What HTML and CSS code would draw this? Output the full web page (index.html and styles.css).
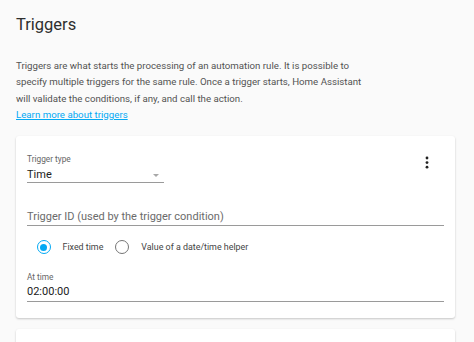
FILE: index.html
```html
<!DOCTYPE html>
<html>
<head>
<meta charset="utf-8">
<link rel="stylesheet" href="styles.css">
</head>
<body>
<div class="page">
  <h1 class="title">Triggers</h1>
  <p class="desc">Triggers are what starts the processing of an automation rule. It is possible to<br>specify multiple triggers for the same rule. Once a trigger starts, Home Assistant<br>will validate the conditions, if any, and call the action.<br><a class="link" href="#">Learn more about triggers</a></p>
  <div class="card">
    <div class="card-top">
      <div class="select">
        <span class="flabel">Trigger type</span>
        <div class="svalue"><span>Time</span><span class="arrow"></span></div>
      </div>
      <div class="kebab">
        <svg width="12" height="16" viewBox="0 0 12 16"><circle cx="6" cy="3" r="1.4" fill="#212121"/><circle cx="6" cy="7.6" r="1.4" fill="#212121"/><circle cx="6" cy="12.2" r="1.4" fill="#212121"/></svg>
      </div>
    </div>
    <div class="textfield"><span class="placeholder">Trigger ID (used by the trigger condition)</span></div>
    <div class="radios">
      <label class="radio-item"><span class="radio checked"></span><span class="rlabel">Fixed time</span></label>
      <label class="radio-item"><span class="radio"></span><span class="rlabel">Value of a date/time helper</span></label>
    </div>
    <div class="field">
      <span class="flabel">At time</span>
      <span class="fvalue">02:00:00</span>
    </div>
  </div>
  <div class="card card2"></div>
</div>
</body>
</html>
```
FILE: styles.css
```css
html, body {
  margin: 0;
  padding: 0;
  background: #fafafa;
  height: 100%;
  overflow: hidden;
}
body {
  font-family: Roboto, "Noto Sans", sans-serif;
  color: #212121;
}
.page {
  padding: 15px 19px 0 16px;
  display: flex;
  flex-direction: column;
}
.title {
  margin: 0;
  font-size: 16.5px;
  line-height: 20px;
  font-weight: 400;
  color: #2e2e2e;
}
.desc {
  margin: 23px 0 0 0;
  font-size: 9.7px;
  line-height: 16.3px;
  color: #525252;
}
.link {
  color: #03a9f4;
  text-decoration: underline;
}
.card {
  margin-top: 13px;
  background: #fff;
  border-radius: 3px;
  box-shadow: 0 1px 2px rgba(0,0,0,0.14), 0 1px 3px rgba(0,0,0,0.08);
  padding: 18px 11px 16px 11px;
  display: flex;
  flex-direction: column;
}
.card2 {
  margin-top: 11px;
  height: 40px;
  padding: 0;
}
.card-top {
  display: flex;
  justify-content: space-between;
  align-items: flex-start;
}
.select {
  width: 137px;
  border-bottom: 1px solid #9a9a9a;
  display: flex;
  flex-direction: column;
}
.flabel {
  font-size: 8.3px;
  line-height: 10px;
  color: #666;
}
.svalue {
  display: flex;
  justify-content: space-between;
  align-items: center;
  font-size: 11px;
  line-height: 14px;
  margin-top: 4px;
}
.arrow {
  width: 0;
  height: 0;
  border-left: 3.5px solid transparent;
  border-right: 3.5px solid transparent;
  border-top: 3.5px solid #a8a8a8;
  margin-right: 5px;
}
.kebab {
  margin-top: 1px;
  margin-right: 11px;
  width: 12px;
  height: 16px;
}
.kebab svg { display: block; }
.textfield {
  margin-top: 27px;
  border-bottom: 1px solid #9a9a9a;
  padding-bottom: 1px;
}
.placeholder {
  display: block;
  font-size: 11px;
  line-height: 14px;
  color: #6b6b6b;
}
.radios {
  margin-top: 14px;
  display: flex;
  align-items: center;
  padding-left: 9.5px;
}
.radio-item {
  display: flex;
  align-items: center;
  margin-right: 12px;
}
.radio {
  width: 14px;
  height: 14px;
  box-sizing: border-box;
  border: 1.6px solid #757575;
  border-radius: 50%;
  display: flex;
  align-items: center;
  justify-content: center;
}
.radio.checked {
  border-color: #03a9f4;
}
.radio.checked::after {
  content: "";
  width: 7px;
  height: 7px;
  border-radius: 50%;
  background: #03a9f4;
}
.rlabel {
  margin-left: 12px;
  font-size: 8.9px;
  line-height: 14px;
  color: #444;
}
.field {
  margin-top: 18px;
  display: flex;
  flex-direction: column;
  border-bottom: 1px solid #9a9a9a;
}
.fvalue {
  margin-top: 3px;
  font-size: 11px;
  line-height: 14px;
  padding-bottom: 2px;
}
```
